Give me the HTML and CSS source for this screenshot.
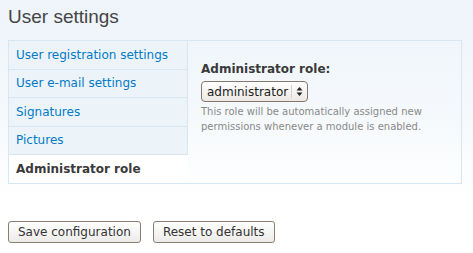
FILE: index.html
```html
<!DOCTYPE html>
<html lang="en">
<head>
<meta charset="utf-8">
<title>User settings</title>
<link rel="stylesheet" href="styles.css">
</head>
<body>
<div class="page">
  <h2 class="title">User settings</h2>
  <div class="vtabs">
    <ul class="vtabs-list">
      <li class="tab"><a href="#">User registration settings</a></li>
      <li class="tab"><a href="#">User e-mail settings</a></li>
      <li class="tab"><a href="#">Signatures</a></li>
      <li class="tab"><a href="#">Pictures</a></li>
      <li class="tab active"><a href="#">Administrator role</a></li>
    </ul>
    <div class="pane">
      <label class="label">Administrator role:</label>
      <div class="select">
        <span class="select-text">administrator</span>
        <span class="select-sep"></span>
        <svg class="select-arrows" width="7" height="11" viewBox="0 0 7 11"><path d="M3.5 1 L6.5 4.5 L0.5 4.5 Z" fill="#222"/><path d="M3.5 10 L6.5 6.5 L0.5 6.5 Z" fill="#222"/></svg>
      </div>
      <div class="description">This role will be automatically assigned new permissions whenever a module is enabled.</div>
    </div>
  </div>
  <div class="actions">
    <button class="btn">Save configuration</button>
    <button class="btn">Reset to defaults</button>
  </div>
</div>
</body>
</html>
```

FILE: styles.css
```css
html, body {
  margin: 0;
  padding: 0;
}
body {
  background: linear-gradient(#edf4fa 0px, #f6f9fc 120px, #ffffff 200px);
  min-height: 253px;
  font-family: "DejaVu Sans", Verdana, sans-serif;
  font-size: 12px;
  color: #494949;
}
.page {
  padding: 0 11px 0 8px;
  display: flex;
  flex-direction: column;
}
.title {
  margin: 0;
  padding-top: 6px;
  font-family: "Liberation Sans", Arial, sans-serif;
  font-weight: normal;
  font-size: 19px;
  line-height: 22px;
  color: #454545;
}
.vtabs {
  margin-top: 12px;
  display: flex;
  border: 1px solid #d6e7f3;
}
.vtabs-list {
  list-style: none;
  margin: 0;
  padding: 0;
  width: 179px;
  flex: none;
  display: flex;
  flex-direction: column;
}
.tab {
  box-sizing: border-box;
  height: 28.5px;
  display: flex;
  align-items: center;
  padding-left: 7px;
  background: #ecf4fa;
  border-bottom: 1px solid #d6e7f3;
  border-right: 1px solid #d6e7f3;
}
.tab a {
  color: #027ac6;
  text-decoration: none;
}
.tab.active {
  height: 28px;
  background: #ffffff;
  border: none;
}
.tab.active a {
  color: #3a3a3a;
  font-weight: bold;
}
.pane {
  flex: 1;
  padding: 21px 13px 0 13px;
  display: flex;
  flex-direction: column;
  align-items: flex-start;
}
.label {
  font-weight: bold;
  line-height: 14px;
  color: #3a3a3a;
}
.select {
  margin-top: 5px;
  box-sizing: border-box;
  width: 107px;
  height: 21px;
  border: 1px solid #85796c;
  border-radius: 4px;
  background: linear-gradient(#ffffff, #ece9e5);
  display: flex;
  align-items: center;
  padding-left: 5px;
  color: #222;
}
.select-text {
  flex: none;
}
.select-sep {
  width: 1px;
  height: 13px;
  background: #d4d0cb;
  margin-left: 3px;
}
.select-arrows {
  margin-left: 4px;
}
.description {
  margin-top: 2px;
  font-size: 10px;
  line-height: 15px;
  color: #898989;
}
.actions {
  margin-top: 37px;
  display: flex;
  gap: 12px;
}
.btn {
  box-sizing: border-box;
  height: 22px;
  padding: 0 9px;
  border: 1px solid #8a7e71;
  border-radius: 3px;
  background: linear-gradient(#ffffff, #ecebe9);
  font-family: "DejaVu Sans", Verdana, sans-serif;
  font-size: 12px;
  color: #333;
}
```
